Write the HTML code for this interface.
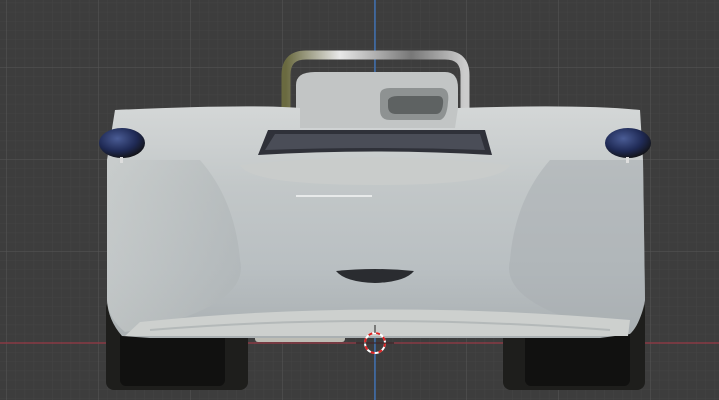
<!DOCTYPE html><html><head><style>html,body{margin:0;padding:0;background:#3d3d3d;overflow:hidden}svg{display:block}</style></head><body>
<svg width="719" height="400" viewBox="0 0 719 400" xmlns="http://www.w3.org/2000/svg">
<defs>
<pattern id="mn" width="9.2" height="9.2" patternUnits="userSpaceOnUse" x="6" y="67"><path d="M0 0V9.2M0 0H9.2" stroke="#444" stroke-width="1" fill="none"/></pattern>
<pattern id="mj" width="92" height="92" patternUnits="userSpaceOnUse" x="6" y="67"><path d="M0 0V92M0 0H92" stroke="#565656" stroke-width="1" fill="none"/></pattern>
<linearGradient id="body" x1="0" y1="0" x2="0" y2="1"><stop offset="0" stop-color="#d4d7d7"/><stop offset=".35" stop-color="#c2c7c8"/><stop offset=".7" stop-color="#b9bfc2"/><stop offset="1" stop-color="#aab0b2"/></linearGradient>
<linearGradient id="side" x1="0" y1="0" x2="1" y2="0"><stop offset="0" stop-color="#c9cdcc"/><stop offset="1" stop-color="#aeb4b6"/></linearGradient>
<linearGradient id="bar" x1="0" y1="0" x2="1" y2="0"><stop offset="0" stop-color="#6a6a40"/><stop offset=".3" stop-color="#e8e8e8"/><stop offset=".7" stop-color="#777"/><stop offset="1" stop-color="#ccc"/></linearGradient>
<radialGradient id="lamp" cx=".4" cy=".35" r=".7"><stop offset="0" stop-color="#4a5c95"/><stop offset=".6" stop-color="#1f2a55"/><stop offset="1" stop-color="#111"/></radialGradient>
</defs>
<rect width="719" height="400" fill="#3d3d3d"/>
<rect width="719" height="400" fill="url(#mn)"/>
<rect width="719" height="400" fill="url(#mj)"/>
<line x1="0" y1="343" x2="719" y2="343" stroke="#8a3a45" stroke-width="1.5"/>
<line x1="375" y1="0" x2="375" y2="400" stroke="#3d6fb0" stroke-width="1.5"/>
<rect x="106" y="300" width="142" height="90" rx="8" fill="#1e1e1c"/>
<rect x="120" y="300" width="105" height="86" rx="6" fill="#111110"/>
<rect x="503" y="300" width="142" height="90" rx="8" fill="#1e1e1c"/>
<rect x="525" y="300" width="105" height="86" rx="6" fill="#111110"/>
<rect x="255" y="334" width="90" height="8" rx="3" fill="#bdbdb5"/>
<path d="M286 130 V75 Q286 55 306 55 H445 Q465 55 465 75 V130" fill="none" stroke="url(#bar)" stroke-width="9"/>
<path d="M296 130 V85 Q296 72 315 72 H445 Q458 72 458 88 V130 Z" fill="#c2c5c5"/>
<path d="M380 95 Q380 88 390 88 H440 Q450 88 448 102 Q447 118 440 120 H390 Q380 120 380 110Z" fill="#8e9292"/>
<path d="M388 100 Q390 96 398 96 H438 Q444 96 443 104 Q442 114 436 114 H396 Q388 114 388 106Z" fill="#5e6262"/>
<path d="M115 110 Q250 104 300 108 L300 128 H455 L458 108 Q580 104 640 110 L643 160 L645 300 Q640 325 630 334 L600 338 H150 L122 336 Q108 320 107 300 L107 160 Z" fill="url(#body)"/>
<path d="M107 160 L200 160 Q235 200 240 260 Q250 300 160 325 L125 332 Q108 318 107 300Z" fill="url(#side)" opacity=".6"/>
<path d="M643 160 L550 160 Q515 200 510 260 Q500 300 590 325 L630 332 Q643 318 645 300Z" fill="#a9afb2" opacity=".55"/>
<path d="M140 322 Q370 298 630 320 L628 336 H125Z" fill="#cdd0ce"/>
<path d="M150 330 Q370 312 610 330" stroke="#a4aaab" stroke-width="2" fill="none" opacity=".6"/>
<path d="M268 130 H485 L492 155 Q375 148 258 155 Z" fill="#2f3139"/>
<path d="M275 134 H480 L485 150 Q375 146 265 150Z" fill="#4a4d57"/>
<path d="M240 165 Q375 150 510 165 Q500 185 375 185 Q250 185 240 165Z" fill="#c9cccb"/>
<line x1="296" y1="196" x2="372" y2="196" stroke="#e8eaea" stroke-width="2"/>
<path d="M336 271 Q375 267 414 271 Q405 282 375 283 Q345 282 336 271Z" fill="#2a2c30"/>
<ellipse cx="122" cy="143" rx="23" ry="15" fill="url(#lamp)"/>
<ellipse cx="628" cy="143" rx="23" ry="15" fill="url(#lamp)"/>
<rect x="120" y="157" width="3" height="6" fill="#ddd"/>
<rect x="626" y="157" width="3" height="6" fill="#ddd"/>
<circle cx="375" cy="343" r="10" fill="none" stroke="#fff" stroke-width="2"/>
<circle cx="375" cy="343" r="10" fill="none" stroke="#d22" stroke-width="2" stroke-dasharray="4 4"/>
<line x1="356" y1="343" x2="394" y2="343" stroke="#222" stroke-width="1"/>
<line x1="375" y1="325" x2="375" y2="333" stroke="#222" stroke-width="1"/>
</svg>
</body></html>
